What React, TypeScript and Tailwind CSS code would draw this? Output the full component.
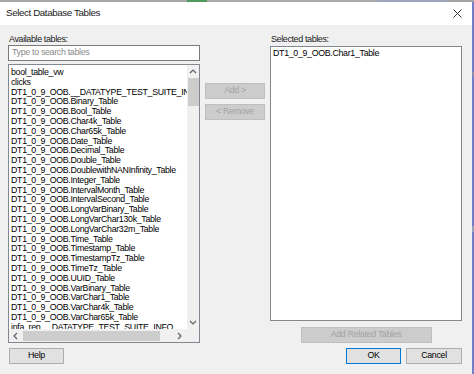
import React from 'react';

const AVAILABLE = [
  'bool_table_vw',
  'clicks',
  'DT1_0_9_OOB.__DATATYPE_TEST_SUITE_INFO',
  'DT1_0_9_OOB.Binary_Table',
  'DT1_0_9_OOB.Bool_Table',
  'DT1_0_9_OOB.Char4k_Table',
  'DT1_0_9_OOB.Char65k_Table',
  'DT1_0_9_OOB.Date_Table',
  'DT1_0_9_OOB.Decimal_Table',
  'DT1_0_9_OOB.Double_Table',
  'DT1_0_9_OOB.DoublewithNANInfinity_Table',
  'DT1_0_9_OOB.Integer_Table',
  'DT1_0_9_OOB.IntervalMonth_Table',
  'DT1_0_9_OOB.IntervalSecond_Table',
  'DT1_0_9_OOB.LongVarBinary_Table',
  'DT1_0_9_OOB.LongVarChar130k_Table',
  'DT1_0_9_OOB.LongVarChar32m_Table',
  'DT1_0_9_OOB.Time_Table',
  'DT1_0_9_OOB.Timestamp_Table',
  'DT1_0_9_OOB.TimestampTz_Table',
  'DT1_0_9_OOB.TimeTz_Table',
  'DT1_0_9_OOB.UUID_Table',
  'DT1_0_9_OOB.VarBinary_Table',
  'DT1_0_9_OOB.VarChar1_Table',
  'DT1_0_9_OOB.VarChar4k_Table',
  'DT1_0_9_OOB.VarChar65k_Table',
  'infa_rep.__DATATYPE_TEST_SUITE_INFO',
];

const font = { fontFamily: '"Liberation Sans", Arial, sans-serif' };

const Chevron: React.FC<{ dir: 'up' | 'down' | 'left' | 'right' }> = ({ dir }) => {
  const pts = {
    up: '1,5 4,2 7,5',
    down: '1,2 4,5 7,2',
    left: '5,1 2,4 5,7',
    right: '2,1 5,4 2,7',
  }[dir];
  return (
    <svg width="8" height="8" viewBox="0 0 8 8" className="shrink-0">
      <polyline points={pts} fill="none" stroke="#606060" strokeWidth="1.2" />
    </svg>
  );
};

const DisabledButton: React.FC<{ label: string; className?: string }> = ({ label, className = '' }) => (
  <div className={`flex items-center justify-center bg-[#cccccc] border border-[#bfbfbf] text-[#a3a3a3] text-[8.8px] tracking-[-0.3px] ${className}`}>
    {label}
  </div>
);

const Button: React.FC<{ label: string; className?: string }> = ({ label, className = '' }) => (
  <div className={`flex items-center justify-center bg-[#e1e1e1] border text-black text-[8.8px] tracking-[-0.3px] ${className}`}>
    {label}
  </div>
);

export default function App() {
  return (
    <div className="w-[474px] h-[374px] flex flex-col overflow-hidden bg-[#9a9a9a]" style={font}>
      {/* desktop strip behind the dialog */}
      <div className="h-[2px] flex shrink-0">
        <div className="w-[187px] bg-[#a7a7a7]" />
        <div className="w-[20px] bg-[#4f9a5a]" />
        <div className="w-[170px] bg-[#a9a9a9]" />
        <div className="w-[70px] bg-[#9ea4c0]" />
        <div className="flex-1 bg-[#a3a3a3]" />
      </div>
      <div className="flex flex-1">
        <div className="w-[472px] flex flex-col bg-[#f0f0f0]">
          {/* title bar */}
          <div className="h-[23px] bg-white flex items-center justify-between pl-[6px] pr-[10px]">
            <span className="text-[9.8px] tracking-[-0.4px] text-[#1a1a1a]">Select Database Tables</span>
            <svg width="9" height="9" viewBox="0 0 9 9">
              <path d="M0.5 0.5 L8.5 8.5 M8.5 0.5 L0.5 8.5" stroke="#333" strokeWidth="1" />
            </svg>
          </div>

          <div className="flex flex-col pl-[8px] pt-[8px]">
            <div className="flex">
              {/* available */}
              <div className="w-[192px] flex flex-col">
                <div className="h-[12px] text-[9px] tracking-[-0.4px] leading-[12px] text-[#1a1a1a] pl-[1px]">Available tables:</div>
                <div className="h-[16px] bg-white border border-[#7a7a7a] flex items-center px-[3px] text-[8.8px] tracking-[-0.3px] text-[#8a8a8a]">
                  Type to search tables
                </div>
                <div className="mt-[3px] h-[279px] border border-[#828790] bg-white grid grid-cols-[1fr_12px] grid-rows-[1fr_13px] overflow-hidden">
                  <div className="overflow-hidden pt-[3px] pl-[2px] text-[8.8px] tracking-[-0.3px] leading-[9.8px] text-black">
                    {AVAILABLE.map((t) => (
                      <div key={t} className="whitespace-nowrap">{t}</div>
                    ))}
                  </div>
                  <div className="bg-[#f0f0f0] flex flex-col items-center">
                    <div className="h-[13px] flex items-center"><Chevron dir="up" /></div>
                    <div className="w-[11px] h-[28px] bg-[#cdcdcd]" />
                    <div className="flex-1" />
                    <div className="h-[13px] flex items-center"><Chevron dir="down" /></div>
                  </div>
                  <div className="bg-[#f0f0f0] flex items-center">
                    <div className="w-[14px] flex justify-center"><Chevron dir="left" /></div>
                    <div className="w-[137px] h-[10px] bg-[#cdcdcd]" />
                    <div className="flex-1" />
                    <div className="w-[14px] flex justify-center"><Chevron dir="right" /></div>
                  </div>
                  <div className="bg-[#f0f0f0]" />
                </div>
              </div>

              {/* add / remove */}
              <div className="ml-[5px] w-[60px] flex flex-col pt-[50px] gap-[5px]">
                <DisabledButton label="Add >" className="h-[16px]" />
                <DisabledButton label="< Remove" className="h-[16px]" />
              </div>

              {/* selected */}
              <div className="ml-[5px] w-[192px] flex flex-col">
                <div className="h-[12px] text-[9px] tracking-[-0.4px] leading-[12px] text-[#1a1a1a] pl-[1px]">Selected tables:</div>
                <div className="mt-[1px] h-[275px] border border-[#828790] bg-white pt-[2px] pl-[2px] text-[8.8px] tracking-[-0.3px] leading-[9.8px] text-black">
                  DT1_0_9_OOB.Char1_Table
                </div>
                <div className="flex justify-center mt-[6px]">
                  <DisabledButton label="Add Related Tables" className="w-[131px] h-[16px]" />
                </div>
              </div>
            </div>

            {/* bottom buttons */}
            <div className="flex items-center mt-[5px] w-[454px]">
              <Button label="Help" className="ml-[1px] w-[55px] h-[16px] border-[#adadad]" />
              <div className="flex-1" />
              <Button label="OK" className="w-[55px] h-[16px] border-[#0078d7]" />
              <Button label="Cancel" className="ml-[5px] w-[56px] h-[16px] border-[#adadad]" />
            </div>
          </div>
        </div>
        <div className="flex-1 flex flex-col bg-[#6f7fcc]">
          <div className="h-[70px]" />
          <div className="h-[4px] bg-[#8a8fa8]" />
          <div className="h-[150px]" />
          <div className="h-[6px] bg-[#9aa0b8]" />
        </div>
      </div>
    </div>
  );
}
